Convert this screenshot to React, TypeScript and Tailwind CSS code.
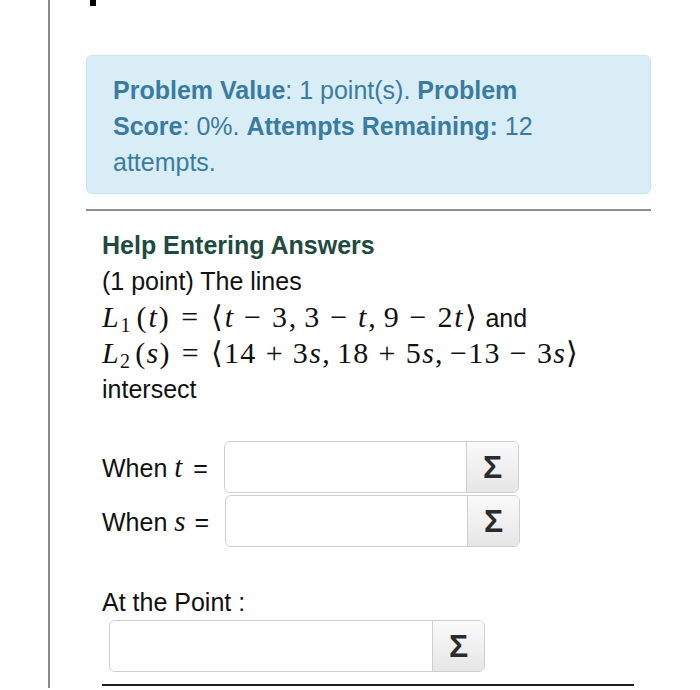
import { ReactNode } from 'react';

const sans = { fontFamily: '"Liberation Sans", Arial, sans-serif' };
const serif = { fontFamily: '"Liberation Serif", "Times New Roman", serif' };

function AnswerBox({ className = '' }: { className?: string }) {
    return (
        <div className={`flex h-[52px] rounded-[6px] border border-[#cfcfcf] bg-white overflow-hidden ${className}`}>
            <div className="flex-1" />
            <div className="w-[52px] flex items-center justify-center border-l border-[#cfcfcf] bg-gradient-to-b from-[#fafafa] to-[#e6e6e6]">
                <span className="text-[32px] font-bold text-[#2b2b2b] leading-none" style={sans}>Σ</span>
            </div>
        </div>
    );
}

// binary operator / relation with KaTeX-like spacing
function Op({ children, wide = false }: { children: ReactNode; wide?: boolean }) {
    return <span className={`not-italic ${wide ? 'mx-[0.36em]' : 'mx-[0.3em]'}`}>{children}</span>;
}

function Comma() {
    return <span className="mr-[0.2em]">,</span>;
}

export default function App() {
    return (
        <div className="w-[700px] h-[690px] bg-white relative overflow-hidden text-[#111]" style={sans}>
            {/* left rule of the page */}
            <div className="absolute left-[48px] top-0 h-[688px] w-[2px] bg-[#8a8a8a]" />
            <div className="absolute left-[90px] top-0 w-[6px] h-[6px] bg-black" />

            <div className="ml-[86px] w-[565px] pt-[55px]">
                {/* info alert */}
                <div className="h-[139px] rounded-[6px] bg-[#d9edf7] border border-[#c6e6f1] pl-[26px] pr-[95px] pt-[16px] text-[25px] leading-[36px] text-[#3a7ba0]">
                    <b>Problem Value</b>: 1 point(s). <b>Problem Score</b>: 0%. <b>Attempts Remaining:</b> 12 attempts.
                </div>

                <div className="mt-[15px] h-[2px] bg-[#8f8f8f]" />

                <div className="pl-[16px] pt-[16px] text-[25px] leading-[36px]">
                    <div className="font-bold text-[#1f4a3f]">Help Entering Answers</div>
                    <div>(1 point) The lines</div>
                    <div className="h-[36px] whitespace-nowrap">
                        <span className="text-[30px] tracking-[1.9px]" style={serif}>
                            <i>L</i><sub className="text-[20px]">1</sub><span className="ml-[4px]">(</span><i>t</i>)<Op wide>=</Op>⟨<i>t</i><Op>−</Op>3<Comma />3<Op>−</Op><i>t</i><Comma />9<Op>−</Op>2<i>t</i>⟩
                        </span>{' '}
                        and
                    </div>
                    <div className="h-[36px] whitespace-nowrap">
                        <span className="text-[30px] tracking-[1.3px]" style={serif}>
                            <i>L</i><sub className="text-[20px]">2</sub><span className="ml-[4px]">(</span><i>s</i>)<Op wide>=</Op>⟨14<Op>+</Op>3<i>s</i><Comma />18<Op>+</Op>5<i>s</i><Comma />−13<Op>−</Op>3<i>s</i>⟩
                        </span>
                    </div>
                    <div>intersect</div>

                    <div className="mt-[34px] flex items-center h-[52px]">
                        <span className="w-[122px]">When <span className="text-[29px] italic" style={serif}>t</span> <span className="ml-[4px]">=</span></span>
                        <AnswerBox className="w-[295px]" />
                    </div>
                    <div className="mt-[2px] flex items-center h-[52px]">
                        <span className="w-[123px]">When <span className="text-[29px] italic" style={serif}>s</span> <span className="ml-[2px]">=</span></span>
                        <AnswerBox className="w-[295px]" />
                    </div>

                    <div className="mt-[37px]">At the Point :</div>
                    <AnswerBox className="ml-[7px] w-[376px]" />
                    <div className="mt-[12px] w-[532px] h-[2px] bg-[#1e1e1e]" />
                </div>
            </div>
        </div>
    );
}
